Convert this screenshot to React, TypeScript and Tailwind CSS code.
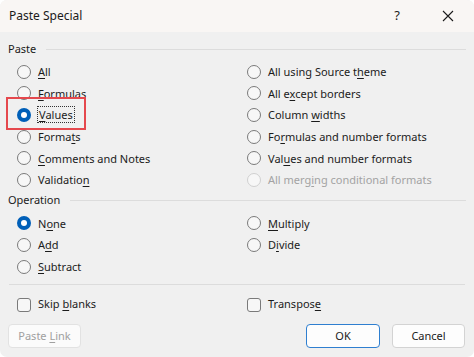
import React from "react";

type Opt = { label: string; key?: number; checked?: boolean; disabled?: boolean; focus?: boolean };

// renders a label with one character underlined (access key)
function AccessLabel({ text, at }: { text: string; at?: number }) {
  if (at === undefined) return <>{text}</>;
  return (
    <>
      {text.slice(0, at)}
      <span className="underline underline-offset-2">{text[at]}</span>
      {text.slice(at + 1)}
    </>
  );
}

function Radio({ opt }: { opt: Opt }) {
  return (
    <div className="flex h-[21.6px] items-center">
      {opt.checked ? (
        <span className="flex size-[14px] items-center justify-center rounded-full bg-[#005fb8]">
          <span className="size-[6px] rounded-full bg-white" />
        </span>
      ) : (
        <span
          className={
            "size-[14px] rounded-full border bg-[#f7f7f7] " +
            (opt.disabled ? "border-[#d0d0d0]" : "border-[#7a7a7a]")
          }
        />
      )}
      <span
        className={
          "leading-[15px] " +
          (opt.disabled ? "text-[#a3a3a3] " : "text-[#1b1b1b] ") +
          (opt.focus ? "ml-[6px] border border-dotted border-[#333] px-[1px]" : "ml-[7px]")
        }
      >
        <AccessLabel text={opt.label} at={opt.key} />
      </span>
    </div>
  );
}

function GroupHeader({ title }: { title: string }) {
  return (
    <div className="flex h-[16px] items-center gap-[10px]">
      <span className="text-[#1b1b1b]">{title}</span>
      <div className="h-px flex-1 bg-[#dcdcdc]" />
    </div>
  );
}

const pasteLeft: Opt[] = [
  { label: "All", key: 0 },
  { label: "Formulas", key: 0 },
  { label: "Values", key: 0, checked: true, focus: true },
  { label: "Formats", key: 5 },
  { label: "Comments and Notes", key: 0 },
  { label: "Validation", key: 9 },
];

const pasteRight: Opt[] = [
  { label: "All using Source theme", key: 18 },
  { label: "All except borders", key: 5 },
  { label: "Column widths", key: 7 },
  { label: "Formulas and number formats", key: 2 },
  { label: "Values and number formats", key: 3 },
  { label: "All merging conditional formats", key: 8, disabled: true },
];

const opLeft: Opt[] = [
  { label: "None", key: 1, checked: true },
  { label: "Add", key: 1 },
  { label: "Subtract", key: 0 },
];

const opRight: Opt[] = [
  { label: "Multiply", key: 0 },
  { label: "Divide", key: 1 },
];

function Checkbox({ label, at }: { label: string; at: number }) {
  return (
    <div className="flex items-center">
      <span className="size-[14px] rounded-[3px] border border-[#7a7a7a] bg-[#f7f7f7]" />
      <span className="ml-[7px] text-[#1b1b1b]">
        <AccessLabel text={label} at={at} />
      </span>
    </div>
  );
}

export default function App() {
  return (
    <div className="h-[357px] w-[474px] bg-white font-['Noto_Sans',sans-serif] text-[11px]">
      <div className="flex h-full flex-col overflow-hidden rounded-[7px] bg-[#f0f0f0]">
        {/*=========== Title bar ===========*/}
        <div className="flex h-[32px] shrink-0 items-center bg-[#f9f6f4] pl-[9px] pr-[20px]">
          <span className="text-[12px] text-[#1b1b1b]">Paste Special</span>
          <span className="ml-auto text-[13px] text-[#1b1b1b]">?</span>
          <svg className="ml-[42px]" width="12" height="12" viewBox="0 0 12 12">
            <path d="M1 1 L11 11 M11 1 L1 11" stroke="#1b1b1b" strokeWidth="1.1" />
          </svg>
        </div>

        {/*=========== Body ===========*/}
        <div className="relative flex flex-1 flex-col px-[8px] pt-[9px]">
          <GroupHeader title="Paste" />
          <div className="mt-[4px] grid grid-cols-[230px_1fr] pl-[9px]">
            <div>
              {pasteLeft.map((o) => (
                <Radio key={o.label} opt={o} />
              ))}
            </div>
            <div>
              {pasteRight.map((o) => (
                <Radio key={o.label} opt={o} />
              ))}
            </div>
          </div>

          {/* highlight box around the selected option */}
          <div className="absolute left-[6px] top-[65px] h-[33px] w-[80px] border-2 border-[#e5484d]" />

          <div className="mt-[2px]">
            <GroupHeader title="Operation" />
          </div>
          <div className="mt-[4px] grid grid-cols-[230px_1fr] pl-[9px]">
            <div>
              {opLeft.map((o) => (
                <Radio key={o.label} opt={o} />
              ))}
            </div>
            <div>
              {opRight.map((o) => (
                <Radio key={o.label} opt={o} />
              ))}
            </div>
          </div>

          <div className="mx-[1px] mt-[7px] h-px bg-[#dcdcdc]" />

          <div className="mt-[11px] grid grid-cols-[230px_1fr] pl-[9px]">
            <Checkbox label="Skip blanks" at={5} />
            <Checkbox label="Transpose" at={8} />
          </div>

          {/*------------- Buttons -------------*/}
          <div className="mt-[11px] flex items-center">
            <button className="h-[24px] w-[73px] rounded-[4px] border border-[#e2e2e2] bg-[#fbfbfb] text-[#a0a0a0]">
              Paste <AccessLabel text="Link" at={0} />
            </button>
            <button className="ml-auto h-[24px] w-[74px] rounded-[4px] border border-[#2f7fd0] bg-[#fdfdfd] text-[#1b1b1b]">
              OK
            </button>
            <button className="ml-[12px] mr-[1px] h-[24px] w-[73px] rounded-[4px] border border-[#d3d3d3] bg-[#fdfdfd] text-[#1b1b1b]">
              Cancel
            </button>
          </div>
        </div>
      </div>
    </div>
  );
}
